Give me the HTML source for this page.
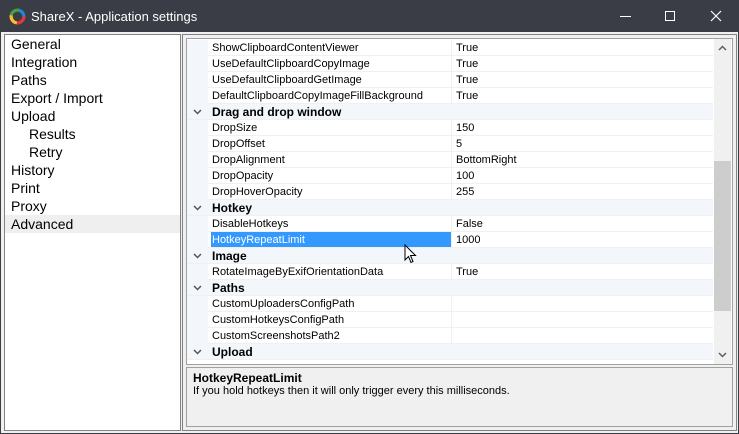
<!DOCTYPE html>
<html><head><style>
*{margin:0;padding:0;box-sizing:border-box}
body{width:739px;height:434px;background:#f0f0f0;font-family:"Liberation Sans",Arial,sans-serif;position:relative;overflow:hidden;border:1px solid #3a3d45}
.tb{position:absolute;left:0;top:0;width:739px;height:31px;background:#3a3d45;color:#fff;font-size:13px}
.tb .t{position:absolute;left:30px;top:8px}
.abs{position:absolute}
.list{left:3px;top:33px;width:177px;height:397px;background:#fff;border:1px solid #828282;font-size:14px;color:#000}
.list div{height:18px;line-height:18px;padding-left:6px}
.rp{left:181px;top:33px;width:555px;height:397px;border:1px solid #828282;background:#f0f0f0}
.grid{left:185px;top:37px;width:547px;height:327px;border:1px solid #a0a0a0;background:#fff;overflow:hidden}
.row{position:absolute;left:0;width:526px;height:16px;font-size:11px;line-height:16px;border-bottom:1px solid #f0f0f0}
.row .n{position:absolute;left:24px;width:240px;height:15px;padding-left:1px}
.row .v{position:absolute;left:264px;padding-left:4px;border-left:1px solid #f0f0f0;height:15px;width:262px}
.row .m{position:absolute;left:0;width:21px;height:16px;background:#f3f6fb}
.cat{background:#f3f6fb;font-weight:bold;font-size:12px}
.cat svg{position:absolute;left:6px;top:5px}
.sel .n{background:#3399ff;color:#fff}
.sb{left:527px;top:0;width:17px;height:325px;background:#f0f0f0}
.help{left:185px;top:366px;width:547px;height:60px;border:1px solid #a0a0a0;background:#f0f0f0;font-size:11px;padding:3px 6px}
</style></head><body>
<div class="tb">
<svg class="abs" style="left:8px;top:7px" width="17" height="17" viewBox="0 0 16 16"><circle cx="8" cy="8" r="6" fill="none" stroke="#e53935" stroke-width="3" stroke-dasharray="10 30"/><circle cx="8" cy="8" r="6" fill="none" stroke="#fbc02d" stroke-width="3" stroke-dasharray="10 30" stroke-dashoffset="-10"/><circle cx="8" cy="8" r="6" fill="none" stroke="#43a047" stroke-width="3" stroke-dasharray="10 30" stroke-dashoffset="-20"/><circle cx="8" cy="8" r="6" fill="none" stroke="#1e88e5" stroke-width="3" stroke-dasharray="8 30" stroke-dashoffset="-30"/></svg>
<span class="t">ShareX - Application settings</span>
<div class="abs" style="left:619px;top:15px;width:11px;height:1px;background:#fff"></div>
<div class="abs" style="left:664px;top:10px;width:10px;height:10px;border:1px solid #fff"></div>
<svg class="abs" style="left:709px;top:9px" width="12" height="12"><path d="M1 1L11 11M11 1L1 11" stroke="#fff" stroke-width="1.2"/></svg>
</div>
<div class="abs list">
<div>General</div><div>Integration</div><div>Paths</div><div>Export / Import</div><div>Upload</div><div style="padding-left:24px">Results</div><div style="padding-left:24px">Retry</div><div>History</div><div>Print</div><div>Proxy</div><div style="background:#efefef">Advanced</div>
</div>
<div class="abs rp"></div>
<div class="abs grid">
<div class="row" style="top:1px"><div class="m"></div><div class="n">ShowClipboardContentViewer</div><div class="v">True</div></div>
<div class="row" style="top:17px"><div class="m"></div><div class="n">UseDefaultClipboardCopyImage</div><div class="v">True</div></div>
<div class="row" style="top:33px"><div class="m"></div><div class="n">UseDefaultClipboardGetImage</div><div class="v">True</div></div>
<div class="row" style="top:49px"><div class="m"></div><div class="n">DefaultClipboardCopyImageFillBackground</div><div class="v">True</div></div>
<div class="row cat" style="top:65px"><svg width="9" height="6"><path d="M1 1L4.5 4.5L8 1" stroke="#555" stroke-width="1.5" fill="none"/></svg><span style="position:absolute;left:25px">Drag and drop window</span></div>
<div class="row" style="top:81px"><div class="m"></div><div class="n">DropSize</div><div class="v">150</div></div>
<div class="row" style="top:97px"><div class="m"></div><div class="n">DropOffset</div><div class="v">5</div></div>
<div class="row" style="top:113px"><div class="m"></div><div class="n">DropAlignment</div><div class="v">BottomRight</div></div>
<div class="row" style="top:129px"><div class="m"></div><div class="n">DropOpacity</div><div class="v">100</div></div>
<div class="row" style="top:145px"><div class="m"></div><div class="n">DropHoverOpacity</div><div class="v">255</div></div>
<div class="row cat" style="top:161px"><svg width="9" height="6"><path d="M1 1L4.5 4.5L8 1" stroke="#555" stroke-width="1.5" fill="none"/></svg><span style="position:absolute;left:25px">Hotkey</span></div>
<div class="row" style="top:177px"><div class="m"></div><div class="n">DisableHotkeys</div><div class="v">False</div></div>
<div class="row sel" style="top:193px"><div class="m"></div><div class="n">HotkeyRepeatLimit</div><div class="v">1000</div></div>
<div class="row cat" style="top:209px"><svg width="9" height="6"><path d="M1 1L4.5 4.5L8 1" stroke="#555" stroke-width="1.5" fill="none"/></svg><span style="position:absolute;left:25px">Image</span></div>
<div class="row" style="top:225px"><div class="m"></div><div class="n">RotateImageByExifOrientationData</div><div class="v">True</div></div>
<div class="row cat" style="top:241px"><svg width="9" height="6"><path d="M1 1L4.5 4.5L8 1" stroke="#555" stroke-width="1.5" fill="none"/></svg><span style="position:absolute;left:25px">Paths</span></div>
<div class="row" style="top:257px"><div class="m"></div><div class="n">CustomUploadersConfigPath</div><div class="v"></div></div>
<div class="row" style="top:273px"><div class="m"></div><div class="n">CustomHotkeysConfigPath</div><div class="v"></div></div>
<div class="row" style="top:289px"><div class="m"></div><div class="n">CustomScreenshotsPath2</div><div class="v"></div></div>
<div class="row cat" style="top:305px"><svg width="9" height="6"><path d="M1 1L4.5 4.5L8 1" stroke="#555" stroke-width="1.5" fill="none"/></svg><span style="position:absolute;left:25px">Upload</span></div>
<div class="abs sb"><svg class="abs" style="left:4px;top:6px" width="9" height="6"><path d="M1 5L4.5 1.5L8 5" stroke="#606060" stroke-width="1.5" fill="none"/></svg><div class="abs" style="left:0;top:122px;width:17px;height:150px;background:#cdcdcd"></div><svg class="abs" style="left:4px;top:313px" width="9" height="6"><path d="M1 1L4.5 4.5L8 1" stroke="#606060" stroke-width="1.5" fill="none"/></svg></div>
</div>
<svg class="abs" style="left:403px;top:243px" width="13" height="20" viewBox="0 0 13 20"><path d="M1 1V16L4.5 12.5L7 18.5L9 17.5L6.5 11.5H11.5Z" fill="#fff" stroke="#000"/></svg>
<div class="abs help"><div style="font-weight:bold;font-size:12px">HotkeyRepeatLimit</div><div>If you hold hotkeys then it will only trigger every this milliseconds.</div></div>
</body></html>
